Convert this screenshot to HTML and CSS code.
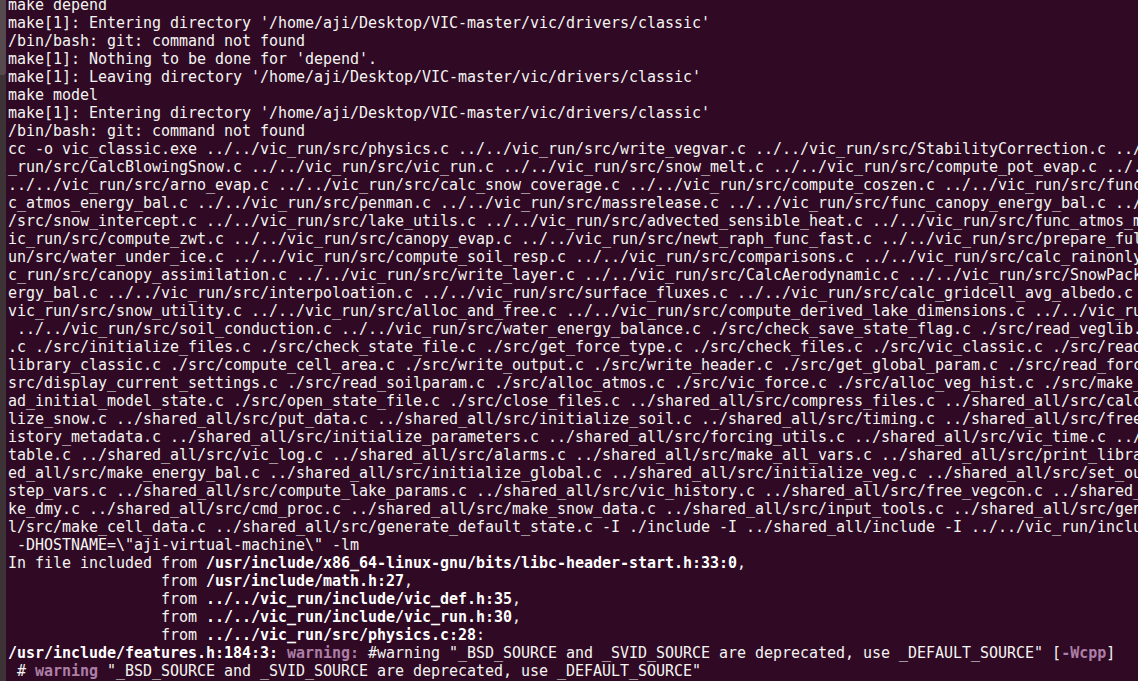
FILE: index.html
```html
<!DOCTYPE html>
<html>
<head>
<meta charset="utf-8">
<link rel="stylesheet" href="styles.css">
</head>
<body>
<div class="window">
  <div class="edge">
    <div class="edge-top"></div>
    <div class="edge-bottom"></div>
  </div>
  <pre class="term">make depend
make[1]: Entering directory '/home/aji/Desktop/VIC-master/vic/drivers/classic'
/bin/bash: git: command not found
make[1]: Nothing to be done for 'depend'.
make[1]: Leaving directory '/home/aji/Desktop/VIC-master/vic/drivers/classic'
make model
make[1]: Entering directory '/home/aji/Desktop/VIC-master/vic/drivers/classic'
/bin/bash: git: command not found
cc -o vic_classic.exe ../../vic_run/src/physics.c ../../vic_run/src/write_vegvar.c ../../vic_run/src/StabilityCorrection.c ../vic
_run/src/CalcBlowingSnow.c ../../vic_run/src/vic_run.c ../../vic_run/src/snow_melt.c ../../vic_run/src/compute_pot_evap.c ../../
../../vic_run/src/arno_evap.c ../../vic_run/src/calc_snow_coverage.c ../../vic_run/src/compute_coszen.c ../../vic_run/src/func_ca
c_atmos_energy_bal.c ../../vic_run/src/penman.c ../../vic_run/src/massrelease.c ../../vic_run/src/func_canopy_energy_bal.c ../../
/src/snow_intercept.c ../../vic_run/src/lake_utils.c ../../vic_run/src/advected_sensible_heat.c ../../vic_run/src/func_atmos_mode
ic_run/src/compute_zwt.c ../../vic_run/src/canopy_evap.c ../../vic_run/src/newt_raph_func_fast.c ../../vic_run/src/prepare_full_
un/src/water_under_ice.c ../../vic_run/src/compute_soil_resp.c ../../vic_run/src/comparisons.c ../../vic_run/src/calc_rainonly.c
c_run/src/canopy_assimilation.c ../../vic_run/src/write_layer.c ../../vic_run/src/CalcAerodynamic.c ../../vic_run/src/SnowPackEn
ergy_bal.c ../../vic_run/src/interpoloation.c ../../vic_run/src/surface_fluxes.c ../../vic_run/src/calc_gridcell_avg_albedo.c ../
vic_run/src/snow_utility.c ../../vic_run/src/alloc_and_free.c ../../vic_run/src/compute_derived_lake_dimensions.c ../../vic_run/s
 ../../vic_run/src/soil_conduction.c ../../vic_run/src/water_energy_balance.c ./src/check_save_state_flag.c ./src/read_veglib.c
.c ./src/initialize_files.c ./src/check_state_file.c ./src/get_force_type.c ./src/check_files.c ./src/vic_classic.c ./src/read_v
library_classic.c ./src/compute_cell_area.c ./src/write_output.c ./src/write_header.c ./src/get_global_param.c ./src/read_forcin
src/display_current_settings.c ./src/read_soilparam.c ./src/alloc_atmos.c ./src/vic_force.c ./src/alloc_veg_hist.c ./src/make_lo
ad_initial_model_state.c ./src/open_state_file.c ./src/close_files.c ../shared_all/src/compress_files.c ../shared_all/src/calc_ro
lize_snow.c ../shared_all/src/put_data.c ../shared_all/src/initialize_soil.c ../shared_all/src/timing.c ../shared_all/src/free_a
istory_metadata.c ../shared_all/src/initialize_parameters.c ../shared_all/src/forcing_utils.c ../shared_all/src/vic_time.c ../sh
table.c ../shared_all/src/vic_log.c ../shared_all/src/alarms.c ../shared_all/src/make_all_vars.c ../shared_all/src/print_library
ed_all/src/make_energy_bal.c ../shared_all/src/initialize_global.c ../shared_all/src/initialize_veg.c ../shared_all/src/set_outpu
step_vars.c ../shared_all/src/compute_lake_params.c ../shared_all/src/vic_history.c ../shared_all/src/free_vegcon.c ../shared_all
ke_dmy.c ../shared_all/src/cmd_proc.c ../shared_all/src/make_snow_data.c ../shared_all/src/input_tools.c ../shared_all/src/gener
l/src/make_cell_data.c ../shared_all/src/generate_default_state.c -I ./include -I ../shared_all/include -I ../../vic_run/include
 -DHOSTNAME=\"aji-virtual-machine\" -lm
In file included from <b>/usr/include/x86_64-linux-gnu/bits/libc-header-start.h:33:0</b>,
                 from <b>/usr/include/math.h:27</b>,
                 from <b>../../vic_run/include/vic_def.h:35</b>,
                 from <b>../../vic_run/include/vic_run.h:30</b>,
                 from <b>../../vic_run/src/physics.c:28</b>:
<b>/usr/include/features.h:184:3:</b> <b class="warn">warning:</b> #warning "_BSD_SOURCE and _SVID_SOURCE are deprecated, use _DEFAULT_SOURCE" [<b class="warn">-Wcpp</b>]
 # <b class="warn">warning</b> "_BSD_SOURCE and _SVID_SOURCE are deprecated, use _DEFAULT_SOURCE"</pre>
</div>
</body>
</html>
```

FILE: styles.css
```css
html, body {
  margin: 0;
  padding: 0;
  background: #300a24;
  overflow: hidden;
}

.window {
  display: flex;
  width: 1138px;
  height: 681px;
  overflow: hidden;
  background: #300a24;
}

.edge {
  flex: 0 0 6px;
  display: flex;
  flex-direction: column;
}

.edge-top {
  height: 75px;
  background: #574a4e;
  border-bottom-right-radius: 2px;
}

.edge-bottom {
  flex: 1;
  background: #3d3336;
}

.term {
  flex: 1;
  margin: -4px 0 0 0;
  padding: 0 0 0 2px;
  font-family: "DejaVu Sans Mono", "Liberation Mono", monospace;
  font-size: 15px;
  letter-spacing: -0.03px;
  line-height: 18px;
  color: #f4f4f2;
  white-space: pre;
  overflow: hidden;
}

.term b {
  font-weight: bold;
  color: #ffffff;
}

.term b.warn {
  color: #ad7fa8;
}
```
